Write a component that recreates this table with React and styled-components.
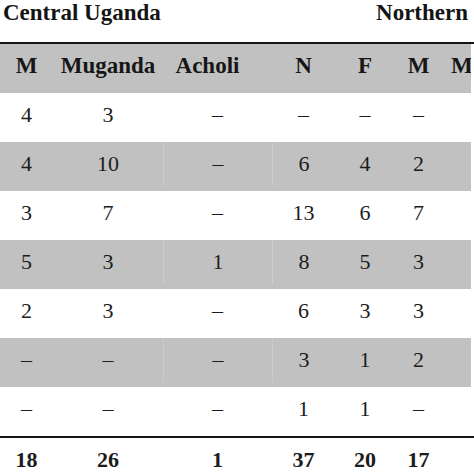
import React from "react";
import styled, { createGlobalStyle } from "styled-components";

const SERIF = `"Liberation Serif", "Times New Roman", "DejaVu Serif", serif`;

const GlobalStyle = createGlobalStyle`
  html, body {
    margin: 0;
    padding: 0;
    background: #ffffff;
  }
  body {
    font-family: ${SERIF};
    color: #1c1c1c;
  }
`;

const headers = ["M", "Muganda", "Acholi", "N", "F", "M", "M–"];

const rows = [
  ["4", "3", "–", "–", "–", "–", ""],
  ["4", "10", "–", "6", "4", "2", ""],
  ["3", "7", "–", "13", "6", "7", ""],
  ["5", "3", "1", "8", "5", "3", ""],
  ["2", "3", "–", "6", "3", "3", ""],
  ["–", "–", "–", "3", "1", "2", ""],
  ["–", "–", "–", "1", "1", "–", ""],
];

const totals = ["18", "26", "1", "37", "20", "17", ""];

export default function App() {
  return (
    <>
      <GlobalStyle />
      <Page>
        <TitleRow>
          <Region>Central Uganda</Region>
          <Region>Northern</Region>
        </TitleRow>
        <Table>
          <Rule />
          <Row $shaded $head>
            {headers.map((h, i) => (
              <HeadCell key={i} $col={i}>
                {h}
              </HeadCell>
            ))}
          </Row>
          {rows.map((r, ri) => (
            <Row key={ri} $shaded={ri % 2 === 1}>
              {r.map((v, i) => (
                <Cell key={i} $col={i} $divider={ri % 2 === 1}>
                  {v}
                </Cell>
              ))}
            </Row>
          ))}
          <Rule />
          <Row>
            {totals.map((v, i) => (
              <Cell key={i} $col={i} $bold>
                {v}
              </Cell>
            ))}
          </Row>
        </Table>
      </Page>
    </>
  );
}

const Page = styled.div`
  width: 474px;
  height: 474px;
  overflow: hidden;
  background: #fff;
  font-family: ${SERIF};
`;

const TitleRow = styled.div`
  display: flex;
  justify-content: space-between;
  align-items: flex-start;
  height: 42px;
  padding: 0 6px 0 3px;
`;

const Region = styled.div`
  font-family: ${SERIF};
  font-size: 23px;
  font-weight: 700;
  line-height: 26px;
  color: #141414;
`;

const Table = styled.div`
  display: flex;
  flex-direction: column;
  width: 474px;
`;

const Rule = styled.div`
  height: 2px;
  background: #151515;
`;

const Row = styled.div`
  display: grid;
  grid-template-columns: 53px 110px 109px 63px 60px 47px 29px;
  height: 49px;
  margin-right: 3px;
  background: ${(p) => (p.$shaded ? "#c1c1c1" : "#ffffff")};
  overflow: hidden;
  padding-bottom: ${(p) => (p.$head ? "6px" : "5px")};
  box-sizing: border-box;
`;

const Cell = styled.div`
  display: flex;
  align-items: center;
  justify-content: ${(p) => (p.$col === 6 ? "flex-start" : "center")};
  padding-left: ${(p) => (p.$col === 6 ? "9px" : "0")};
  font-family: ${SERIF};
  font-size: 22px;
  font-weight: ${(p) => (p.$bold ? 700 : 400)};
  white-space: nowrap;
  color: #1c1c1c;
  border-left: ${(p) =>
    p.$divider && (p.$col === 2 || p.$col === 3)
      ? "1px solid rgba(255, 255, 255, 0.18)"
      : "none"};
`;

const HeadCell = styled(Cell)`
  font-size: 23px;
  font-weight: 700;
  color: #161616;
  padding-right: ${(p) => (p.$col === 2 ? "20px" : "0")};
`;
